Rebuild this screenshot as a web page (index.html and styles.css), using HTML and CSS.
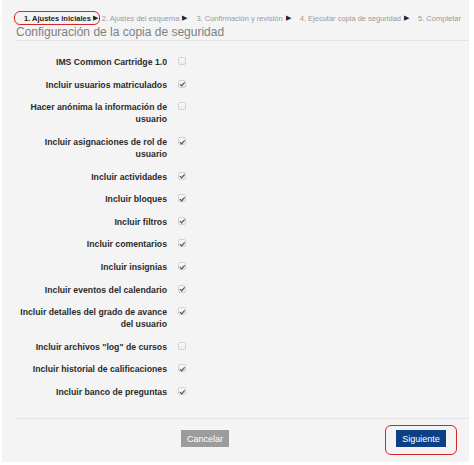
FILE: index.html
```html
<!DOCTYPE html>
<html lang="es">
<head>
<meta charset="utf-8">
<title>Configuración de la copia de seguridad</title>
<link rel="stylesheet" href="styles.css">
</head>
<body>
<div class="page">
  <div class="crumbs">
    <span class="mark"><b class="current">1. Ajustes iniciales</b><span class="arrow">&#9654;</span></span>
    <span class="step">2. Ajustes del esquema</span><span class="arrow">&#9654;</span>
    <span class="step">3. Confirmación y revisión</span><span class="arrow">&#9654;</span>
    <span class="step">4. Ejecutar copia de seguridad</span><span class="arrow">&#9654;</span>
    <span class="step">5. Completar</span>
  </div>
  <h2 class="title">Configuración de la copia de seguridad</h2>
  <form class="form">
    <div class="row"><label class="label">IMS Common Cartridge 1.0</label><span class="box"></span></div>
    <div class="row"><label class="label">Incluir usuarios matriculados</label><span class="box on"></span></div>
    <div class="row"><label class="label">Hacer anónima la información de usuario</label><span class="box"></span></div>
    <div class="row"><label class="label">Incluir asignaciones de rol de usuario</label><span class="box on"></span></div>
    <div class="row"><label class="label">Incluir actividades</label><span class="box on"></span></div>
    <div class="row"><label class="label">Incluir bloques</label><span class="box on"></span></div>
    <div class="row"><label class="label">Incluir filtros</label><span class="box on"></span></div>
    <div class="row"><label class="label">Incluir comentarios</label><span class="box on"></span></div>
    <div class="row"><label class="label">Incluir insignias</label><span class="box on"></span></div>
    <div class="row"><label class="label">Incluir eventos del calendario</label><span class="box on"></span></div>
    <div class="row"><label class="label">Incluir detalles del grado de avance del usuario</label><span class="box on"></span></div>
    <div class="row"><label class="label">Incluir archivos "log" de cursos</label><span class="box"></span></div>
    <div class="row"><label class="label">Incluir historial de calificaciones</label><span class="box on"></span></div>
    <div class="row"><label class="label">Incluir banco de preguntas</label><span class="box on"></span></div>
  </form>
  <div class="footer">
    <button class="btn cancel" type="button">Cancelar</button>
    <span class="ring"><button class="btn next" type="button">Siguiente</button></span>
  </div>
</div>
</body>
</html>
```
FILE: styles.css
```css
html, body {
  margin: 0;
  padding: 0;
  background: #ffffff;
}
body {
  font-family: "Liberation Sans", Arial, sans-serif;
  color: #333;
}
.page {
  margin-left: 2px;
  width: 467px;
  height: 462px;
  background: #f4f4f4;
  display: flex;
  flex-direction: column;
}
.crumbs {
  margin: 11px 0 0 12px;
  height: 14px;
  display: flex;
  align-items: center;
  font-size: 7.5px;
  color: #9a9a9a;
  white-space: nowrap;
}
.mark {
  display: flex;
  align-items: center;
  height: 12px;
  padding: 0 1px 0 9px;
  border: 1.5px solid #d8232a;
  border-radius: 6px;
}
.current {
  color: #222;
  font-weight: bold;
}
.arrow {
  color: #222;
  font-size: 6.5px;
  margin: 0 7px 0 3px;
}
.mark .arrow {
  margin: 0 0 0 2px;
}
.step {
  margin-left: 2px;
}
.title {
  margin: 0 0 0 14px;
  padding: 0 0 1px 0;
  height: 14px;
  line-height: 14px;
  font-size: 12px;
  font-weight: normal;
  color: #7f7f7f;
  border-bottom: 1px solid #e4e4e4;
}
.form {
  margin: 10px 0 0 0;
  display: flex;
  flex-direction: column;
}
.row {
  display: flex;
  align-items: flex-start;
  padding: 5.3px 0;
}
.label {
  width: 150px;
  margin-left: 15px;
  text-align: right;
  font-size: 8.7px;
  line-height: 12px;
  font-weight: bold;
  color: #2b2b2b;
}
.box {
  position: relative;
  width: 6px;
  height: 6px;
  margin: 1px 0 0 11px;
  border: 1px solid #d2d2d2;
  border-radius: 2px;
  background: linear-gradient(#fbfbfb, #ebebeb);
  flex: none;
}
.box.on::after {
  content: "";
  position: absolute;
  left: 2px;
  top: 0.5px;
  width: 1.5px;
  height: 3.5px;
  border: solid #444;
  border-width: 0 1.3px 1.3px 0;
  transform: rotate(40deg);
}
.footer {
  margin: 15px 0 0 13px;
  border-top: 1px solid #e4e4e4;
  display: flex;
  align-items: flex-start;
  padding-top: 6px;
}
.btn {
  font-family: "Liberation Sans", Arial, sans-serif;
  font-size: 9px;
  color: #fff;
  border: 0;
  border-radius: 0;
  height: 17px;
  padding: 0;
}
.cancel {
  margin: 5px 0 0 166px;
  width: 48px;
  background: #9c9c9c;
}
.ring {
  margin-left: auto;
  margin-right: 12px;
  display: flex;
  padding: 4px 10px 7px 10px;
  border: 1.5px solid #d8232a;
  border-radius: 6px;
}
.next {
  width: 50px;
  background: #0d3f86;
}
```
